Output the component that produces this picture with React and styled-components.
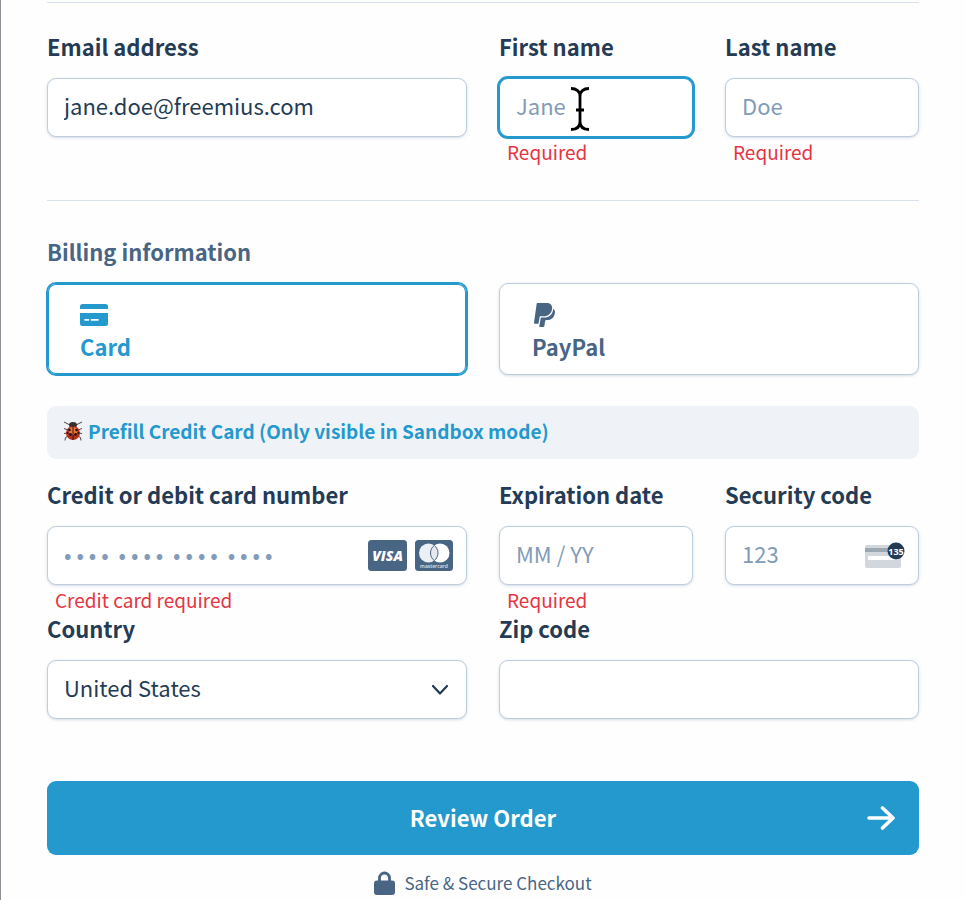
import React, { useState } from 'react';
import styled, { createGlobalStyle, css } from 'styled-components';

const colors = {
  accent: '#2499ce',
  text: '#243b55',
  muted: '#486584',
  placeholder: '#829bb8',
  border: '#bccde0',
  line: '#d8e2ef',
  error: '#e53542',
  panel: '#eff3f8'
};

const GlobalStyle = createGlobalStyle`
  *,
  *:before,
  *:after {
    box-sizing: border-box;
  }

  body {
    margin: 0;
    background: #fefefe;
    color: ${colors.text};
    font-family: 'Noto Sans CJK JP', 'Noto Sans', sans-serif;
    font-size: 22px;
    line-height: 28px;
  }

  input,
  select,
  button {
    font: inherit;
    color: inherit;
  }
`;

const Page = styled.main`
  min-height: 100vh;
  padding: 2px 46px 0;
  border-left: 1px solid #8d9197;
`;

const Divider = styled.hr`
  height: 1px;
  margin: 0;
  border: 0;
  background: ${colors.line};
`;

const Grid = styled.div`
  display: grid;
  grid-template-columns: repeat(4, minmax(0, 1fr));
  column-gap: 32px;
`;

const ContactGrid = styled(Grid)`
  padding: 29px 0 34px;
`;

const Field = styled.div`
  grid-column: span ${props => props.$span || 1};
`;

const Label = styled.label`
  display: block;
  margin-bottom: 18px;
  font-weight: 700;
`;

const Control = styled.div`
  position: relative;
  display: flex;
  align-items: center;
  height: 59px;
  padding-right: ${props => (props.$select ? 17 : 13)}px;
  border: 1px solid ${colors.border};
  border-radius: 9px;
  background: #fff;
  box-shadow: 0 1px 3px rgba(72, 101, 132, 0.22);

  ${props =>
    props.$active &&
    css`
      border-color: ${colors.accent};
      box-shadow: 0 0 0 2px ${colors.accent};
    `};
`;

const controlText = css`
  flex: 1;
  min-width: 0;
  height: 100%;
  padding: 0 0 5px 16px;
  border: 0;
  outline: 0;
  background: transparent;
`;

const Input = styled.input`
  ${controlText};

  &::placeholder {
    color: ${colors.placeholder};
    opacity: 1;
  }
`;

const Select = styled.select`
  ${controlText};
  appearance: none;
`;

const Error = styled.div`
  padding-left: 8px;
  color: ${colors.error};
  font-size: 19px;
  line-height: 29px;
`;

const Pointer = styled.svg`
  position: absolute;
  top: 7px;
  left: 69px;
  pointer-events: none;
`;

const CardBrands = styled.div`
  display: flex;
  gap: 8px;
`;

const Billing = styled.fieldset`
  min-width: 0;
  margin: 36px 0 0;
  padding: 0;
  border: 0;
`;

const Legend = styled.legend`
  margin-bottom: 18px;
  padding: 0;
  color: ${colors.muted};
  font-weight: 700;
`;

const Methods = styled.div`
  display: grid;
  grid-template-columns: 1fr 1fr;
  gap: 32px;
`;

const Method = styled.label`
  display: flex;
  flex-direction: column;
  justify-content: center;
  height: 92px;
  padding: 0 32px;
  border: 1px solid ${colors.border};
  border-radius: 9px;
  background: #fff;
  box-shadow: 0 1px 3px rgba(72, 101, 132, 0.22);
  color: ${colors.muted};
  font-weight: 700;
  cursor: pointer;

  input {
    appearance: none;
    position: absolute;
    margin: 0;
  }

  ${props =>
    props.$selected &&
    css`
      border-color: ${colors.accent};
      color: ${colors.accent};
      box-shadow: 0 0 0 1px ${colors.accent},
        inset 0 0 0 1px ${colors.accent};
    `};
`;

const MethodIcon = styled.span`
  display: flex;
  align-items: center;
  height: 34px;
`;

const Prefill = styled.button`
  display: flex;
  align-items: center;
  gap: 5px;
  width: 100%;
  height: 53px;
  margin: 31px 0 21px;
  padding: 0 16px 3px;
  border: 0;
  border-radius: 9px;
  background: ${colors.panel};
  color: ${colors.accent};
  font-size: 19px;
  font-weight: 700;
  cursor: pointer;
`;

const Submit = styled.button`
  display: grid;
  grid-template-columns: 1fr auto 1fr;
  align-items: center;
  width: 100%;
  height: 74px;
  margin: 62px 0 16px;
  padding: 0 24px;
  border: 0;
  border-radius: 9px;
  background: ${colors.accent};
  color: #fff;
  font-weight: 700;
  cursor: pointer;

  span {
    grid-column: 2;
    padding-bottom: 3px;
  }

  svg {
    justify-self: end;
  }
`;

const Secure = styled.div`
  display: flex;
  justify-content: center;
  align-items: center;
  gap: 9px;
  color: ${colors.muted};
  font-size: 17px;
  line-height: 24px;
`;

const CardIcon = () => (
  <svg width="28" height="22" viewBox="0 0 28 22" fill="currentColor">
    <path d="M2.500 0h23A2.500 2.500 0 0 1 28 2.500V5H0V2.500A2.500 2.500 0 0 1 2.500 0z" />
    <path
      fillRule="evenodd"
      d="M0 9h28v10.500a2.500 2.500 0 0 1-2.500 2.500h-23A2.500 2.500 0 0 1 0 19.500zM5 15a.8.8 0 0 0 0 1.700h3.500a.8.8 0 0 0 0-1.700zM11.500 15a.8.8 0 0 0 0 1.700h6.500a.8.8 0 0 0 0-1.700z"
    />
  </svg>
);

const PaypalIcon = () => (
  <svg width="24" height="24" viewBox="-6 0 72 72" fill="currentColor">
    <path d="M10 0h28c12 0 18 7 16 19-2 13-11 21-25 21h-8c-3 0-4 1-4.500 4L14 59a3 3 0 0 1-3 3H2a2 2 0 0 1-2-2.500L8 2a2 2 0 0 1 2-2z" />
    <path d="M58 17c5 4 6 10 4 16-3 12-11 18-23 18h-2c-2 0-3 1-3.500 3L31 69a3 3 0 0 1-3 3H18a2 2 0 0 1-2-2.500L20 46c.4-2 1-2.500 3-2.500h7c16 0 26-9 28-26.500z" />
  </svg>
);

const LockIcon = () => (
  <svg width="21" height="24" viewBox="0 0 21 24" aria-hidden="true">
    <path
      d="M5.500 11V7a5 5 0 0 1 10 0v4"
      fill="none"
      stroke={colors.muted}
      strokeWidth="2.800"
    />
    <rect y="9.500" width="21" height="14.500" rx="3" fill={colors.muted} />
  </svg>
);

const Ladybug = () => (
  <svg width="20" height="20" viewBox="0 0 20 20">
    <g fill="none" stroke="#4a4645" strokeWidth="1">
      <path d="M7 4 4 2.500 1 1M13 4l3-1.500L19 1M5 9 1 7.500M15 9l4-1.500M4.500 12 1 12.500M15.500 12l3.500.5M5.500 15l-3 1.500L2 19.500M14.500 15l3 1.500.5 3" />
    </g>
    <ellipse cx="10" cy="4" rx="4" ry="3" fill="#38302f" />
    <ellipse cx="10" cy="12" rx="7" ry="7" fill="#b5301a" />
    <ellipse cx="10" cy="10" rx="4.500" ry="4" fill="#ea7636" />
    <path d="M10 5v14" stroke="#3a1714" strokeWidth="1" />
    <g fill="#2b1513">
      <circle cx="6.500" cy="9" r="1.300" />
      <circle cx="13.500" cy="9" r="1.300" />
      <circle cx="7.500" cy="13.500" r="1.400" />
      <circle cx="12.500" cy="13.500" r="1.400" />
      <circle cx="4.500" cy="12" r="1" />
      <circle cx="15.500" cy="12" r="1" />
    </g>
  </svg>
);

const VisaIcon = () => (
  <svg width="39" height="31" viewBox="0 0 39 31" role="img" aria-label="Visa">
    <rect width="39" height="31" rx="3.500" fill={colors.muted} />
    <text
      x="19.500"
      y="20.500"
      textAnchor="middle"
      fill="#fff"
      fontFamily="Open Sans, sans-serif"
      fontSize="14"
      fontStyle="italic"
      fontWeight="800"
    >
      VISA
    </text>
  </svg>
);

const MastercardIcon = () => (
  <svg width="38" height="31" viewBox="0 0 38 31" role="img" aria-label="Mastercard">
    <rect width="38" height="31" rx="3.500" fill={colors.muted} />
    <circle cx="13.500" cy="13" r="9.500" fill="#eceff4" />
    <circle cx="25" cy="13" r="9.500" fill="#fff" />
    <path
      d="M19.250 5.440a9.500 9.500 0 0 1 0 15.120a9.500 9.500 0 0 1 0-15.120z"
      fill="#e6eaf0"
      stroke={colors.muted}
      strokeWidth="1"
    />
    <text
      x="19"
      y="27.500"
      textAnchor="middle"
      fill="#dfe5ec"
      fontFamily="Open Sans, sans-serif"
      fontSize="5"
      fontWeight="600"
    >
      mastercard
    </text>
  </svg>
);

const CvcIcon = () => (
  <svg width="40" height="28" viewBox="0 0 40 28" aria-hidden="true">
    <rect y="3" width="36" height="23" rx="2" fill="#d2d7dd" />
    <path d="M0 6h36v4H0z" fill="#9da8b5" />
    <rect x="3" y="14" width="30" height="4" rx="1" fill="#fff" />
    <circle cx="31" cy="9" r="8.500" fill={colors.text} />
    <text
      x="31"
      y="12.500"
      textAnchor="middle"
      fill="#fff"
      fontFamily="Open Sans, sans-serif"
      fontSize="9"
      fontWeight="700"
    >
      135
    </text>
  </svg>
);

const Chevron = () => (
  <svg width="18" height="12" viewBox="0 0 18 12" aria-hidden="true">
    <path
      d="m2 2 7 7.500L16 2"
      fill="none"
      stroke={colors.text}
      strokeWidth="2.200"
      strokeLinecap="round"
      strokeLinejoin="round"
    />
  </svg>
);

const Arrow = () => (
  <svg width="28" height="24" viewBox="0 0 28 24" aria-hidden="true">
    <path
      d="M2 12h23M15.500 2 26 12 15.500 22"
      fill="none"
      stroke="#fff"
      strokeWidth="3.600"
      strokeLinecap="round"
      strokeLinejoin="round"
    />
  </svg>
);

const TextCursor = () => (
  <Pointer width="22" height="46" viewBox="0 0 22 46" aria-hidden="true">
    <path
      d="M2 2.500c5 0 9 2 9 8v25c0 6-4 8-9 8M20 2.500c-5 0-9 2-9 8v25c0 6 4 8 9 8M7 24h8"
      fill="none"
      stroke="#000"
      strokeWidth="2.800"
    />
  </Pointer>
);

// four groups of spaced dots, nbsp keeps the gaps between groups wide
const cardPlaceholder = Array(4)
  .fill('•\u00a0•\u00a0•\u00a0•')
  .join('\u00a0\u00a0');

const TextField = ({ id, label, span, error, active, children, ...input }) => (
  <Field $span={span}>
    <Label htmlFor={id}>{label}</Label>
    <Control $active={active}>
      <Input id={id} type="text" {...input} />
      {children}
    </Control>
    {error && <Error>{error}</Error>}
  </Field>
);

const App = () => {
  const [method, setMethod] = useState('card');

  return (
    <>
      <GlobalStyle />
      <Page>
        <Divider />
        <form onSubmit={evt => evt.preventDefault()}>
          <ContactGrid>
            <TextField
              id="email"
              label="Email address"
              type="email"
              span={2}
              defaultValue="jane.doe@freemius.com"
            />
            <TextField
              id="first-name"
              label="First name"
              placeholder="Jane"
              error="Required"
              active
            >
              <TextCursor />
            </TextField>
            <TextField
              id="last-name"
              label="Last name"
              placeholder="Doe"
              error="Required"
            />
          </ContactGrid>
          <Divider />

          <Billing>
            <Legend>Billing information</Legend>
            <Methods>
              <Method $selected={method === 'card'}>
                <input
                  type="radio"
                  name="method"
                  checked={method === 'card'}
                  onChange={() => setMethod('card')}
                />
                <MethodIcon>
                  <CardIcon />
                </MethodIcon>
                Card
              </Method>
              <Method $selected={method === 'paypal'}>
                <input
                  type="radio"
                  name="method"
                  checked={method === 'paypal'}
                  onChange={() => setMethod('paypal')}
                />
                <MethodIcon>
                  <PaypalIcon />
                </MethodIcon>
                PayPal
              </Method>
            </Methods>
          </Billing>

          <Prefill type="button">
            <Ladybug />
            Prefill Credit Card (Only visible in Sandbox mode)
          </Prefill>

          <Grid>
            <TextField
              id="card-number"
              label="Credit or debit card number"
              placeholder={cardPlaceholder}
              error="Credit card required"
              span={2}
            >
              <CardBrands>
                <VisaIcon />
                <MastercardIcon />
              </CardBrands>
            </TextField>
            <TextField
              id="expiration"
              label="Expiration date"
              placeholder="MM / YY"
              error="Required"
            />
            <TextField id="cvc" label="Security code" placeholder="123">
              <CvcIcon />
            </TextField>
            <Field $span={2}>
              <Label htmlFor="country">Country</Label>
              <Control $select>
                <Select id="country" defaultValue="US">
                  <option value="US">United States</option>
                </Select>
                <Chevron />
              </Control>
            </Field>
            <TextField id="zip" label="Zip code" span={2} />
          </Grid>

          <Submit type="submit">
            <span>Review Order</span>
            <Arrow />
          </Submit>
        </form>
        <Secure>
          <LockIcon />
          Safe &amp; Secure Checkout
        </Secure>
      </Page>
    </>
  );
};

export default App;
